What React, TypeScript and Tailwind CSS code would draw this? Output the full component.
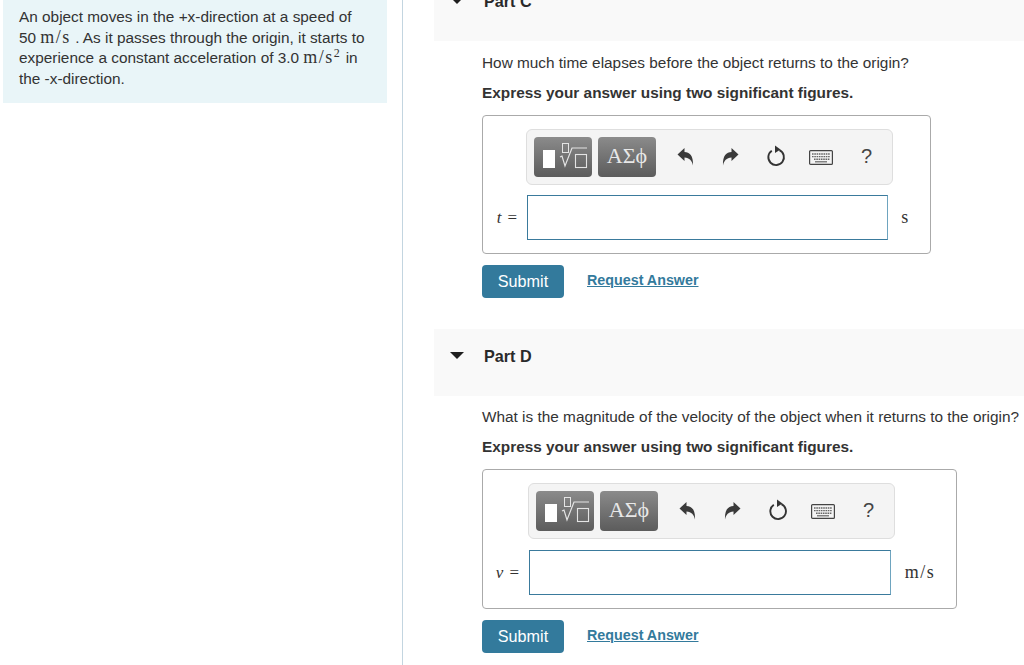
const serif = "font-['Liberation_Serif',serif]";

const Undo = ({ flip = false }: { flip?: boolean }) => (
  <svg width="17" height="19" viewBox="0 0 17 19" className={flip ? '-scale-x-100' : ''}>
    <path d="M0.5 7.5 L7.5 1 V5 C12.5 5 16.5 8.5 16 18.5 C15 13.5 12.5 11 7.5 10.5 V14 Z" fill="#3a3a3a" />
  </svg>
);

const Reset = () => (
  <svg width="20" height="22" viewBox="0 0 20 22">
    <path d="M5.8 5.8 A7.8 7.8 0 1 0 13.4 5.2" fill="none" stroke="#333" strokeWidth="1.9" />
    <path d="M9 0.5 L14.5 4.5 L9 8 Z" fill="#333" />
  </svg>
);

const Keyboard = () => (
  <svg width="24" height="15" viewBox="0 0 24 15">
    <rect x="0.6" y="0.6" width="22.8" height="13.8" rx="1" fill="#f4f4f4" stroke="#444" strokeWidth="1.2" />
    <path d="M3 4 H21" stroke="#666" strokeWidth="1.4" strokeDasharray="1.6 0.7" />
    <path d="M3 6.6 H21" stroke="#666" strokeWidth="1.4" strokeDasharray="1.6 0.7" />
    <path d="M5 9.2 H21" stroke="#666" strokeWidth="1.4" strokeDasharray="1.6 0.7" />
    <path d="M6 11.8 H18" stroke="#666" strokeWidth="1.2" />
  </svg>
);

const Templates = () => (
  <svg width="58" height="40" viewBox="0 0 58 40">
    <rect x="9" y="13" width="12" height="18" fill="#fff" />
    <rect x="28.5" y="6.5" width="6" height="9" fill="none" stroke="#e4e4e4" strokeWidth="1" />
    <path d="M26 20 L28 19 L31 29 L38 11 H53" fill="none" stroke="#e4e4e4" strokeWidth="1.2" />
    <rect x="41.5" y="17.5" width="11" height="13" fill="none" stroke="#e4e4e4" strokeWidth="1.1" />
  </svg>
);

const Toolbar = () => (
  <div className="flex h-[56px] w-[367px] items-center rounded-md border border-[#dedede] bg-[#f4f4f4] pl-[7px]">
    <div className="h-[40px] w-[58px] overflow-hidden rounded bg-gradient-to-b from-[#8b8b8b] to-[#5c5c5c]">
      <Templates />
    </div>
    <div className={`${serif} ml-[6px] flex h-[40px] w-[58px] items-center justify-center rounded bg-gradient-to-b from-[#8b8b8b] to-[#5c5c5c] pb-[3px] text-[22px] text-[#e8e8e8]`}>
      ΑΣϕ
    </div>
    <div className="mb-[2px] ml-[21px] flex w-[17px] justify-center"><Undo /></div>
    <div className="mb-[2px] ml-[28px] flex w-[17px] justify-center"><Undo flip /></div>
    <div className="mb-[2px] ml-[27px] flex w-[20px] justify-center"><Reset /></div>
    <div className="ml-[23px] flex w-[24px] justify-center"><Keyboard /></div>
    <div className="mb-[3px] ml-[28px] text-[20px] leading-none text-[#444]">?</div>
  </div>
);

const Units = ({ children }: { children: React.ReactNode }) => (
  <span className={`${serif} text-[18px] leading-none tracking-[1.5px]`}>{children}</span>
);

interface PartProps {
  name: string;
  question: string;
  variable: string;
  unit: string;
  boxWidth: string;
  inputWidth: string;
  labelWidth: string;
  toolbarOffset: string;
  tight?: boolean;
}

const Part = ({ name, question, variable, unit, boxWidth, inputWidth, labelWidth, toolbarOffset, tight }: PartProps) => (
  <section>
    <div className="flex h-[67px] items-start bg-[#f9f9f9] pt-[17px]">
      <svg width="14" height="7" viewBox="0 0 14 7" className="ml-[16px] mt-[6px]">
        <path d="M0 0 H14 L7 7 Z" fill="#1f1f1f" />
      </svg>
      <h3 className="ml-[20px] text-[16.2px] leading-[20px] font-bold text-[#2a2a2a]">{name}</h3>
    </div>
    <div className="pl-[48px]">
      <p className={`whitespace-nowrap text-[15.36px] leading-[20px] text-[#333] ${tight ? 'mt-[12px]' : 'mt-[11px]'}`}>{question}</p>
      <p className="mt-[10px] text-[15.36px] leading-[20px] font-bold text-[#333]">Express your answer using two significant figures.</p>
      <div className={`rounded border border-[#aaa] pt-[13px] pb-[13px] ${tight ? 'mt-[12px]' : 'mt-[12px]'} ${boxWidth}`}>
        <div className={toolbarOffset}>
          <Toolbar />
        </div>
        <div className={`flex items-center ${tight ? 'mt-[10px]' : 'mt-[11px]'}`}>
          <div className={`${serif} pr-[10px] text-right text-[17px] text-[#333] ${labelWidth}`}>
            <i>{variable}</i>
            <span className="ml-[6px]">=</span>
          </div>
          <div className={`h-[45px] border border-[#3a7a9c] border-r-[#6ea4bf] bg-white ${inputWidth}`} />
          <div className="flex-1 pr-[7px] text-center text-[#333]"><Units>{unit}</Units></div>
        </div>
      </div>
      <div className="mt-[11px] flex items-center">
        <button className="h-[33px] w-[82px] rounded-sm bg-[#337a9c] text-[16.2px] text-white">Submit</button>
        <a className="ml-[23px] pb-[2px] text-[14.3px] font-bold text-[#337a9c] underline">Request Answer</a>
      </div>
    </div>
  </section>
);

export default function App() {
  return (
    <div className="flex h-[665px] w-[1024px] overflow-hidden bg-white font-['Liberation_Sans',sans-serif]">
      <aside className="w-[403px] shrink-0 border-r border-[#c3d5e0] pl-[3px]">
        <div className="h-[103px] w-[384px] bg-[#e9f5f8] pt-[7px] pr-[17px] pl-[16px] text-[15.36px] leading-[20.5px] text-[#333]">
          An object moves in the +x-direction at a speed of 50 <Units>m/s</Units> . As it passes through the origin, it starts to experience a constant acceleration of 3.0{' '}
          <Units>m/s<sup className="text-[12px] leading-none">2</sup></Units> in the -x-direction.
        </div>
      </aside>
      <main className="-mt-[26px] ml-[31px] flex-1">
        <Part name="Part C" question="How much time elapses before the object returns to the origin?" variable="t" unit="s" boxWidth="w-[449px]" inputWidth="w-[361px]" labelWidth="w-[44px]" toolbarOffset="ml-[43px]" tight />
        <div className="mt-[31px]">
          <Part name="Part D" question="What is the magnitude of the velocity of the object when it returns to the origin?" variable="v" unit="m/s" boxWidth="w-[475px]" inputWidth="w-[362px]" labelWidth="w-[46px]" toolbarOffset="ml-[45px]" />
        </div>
      </main>
    </div>
  );
}
